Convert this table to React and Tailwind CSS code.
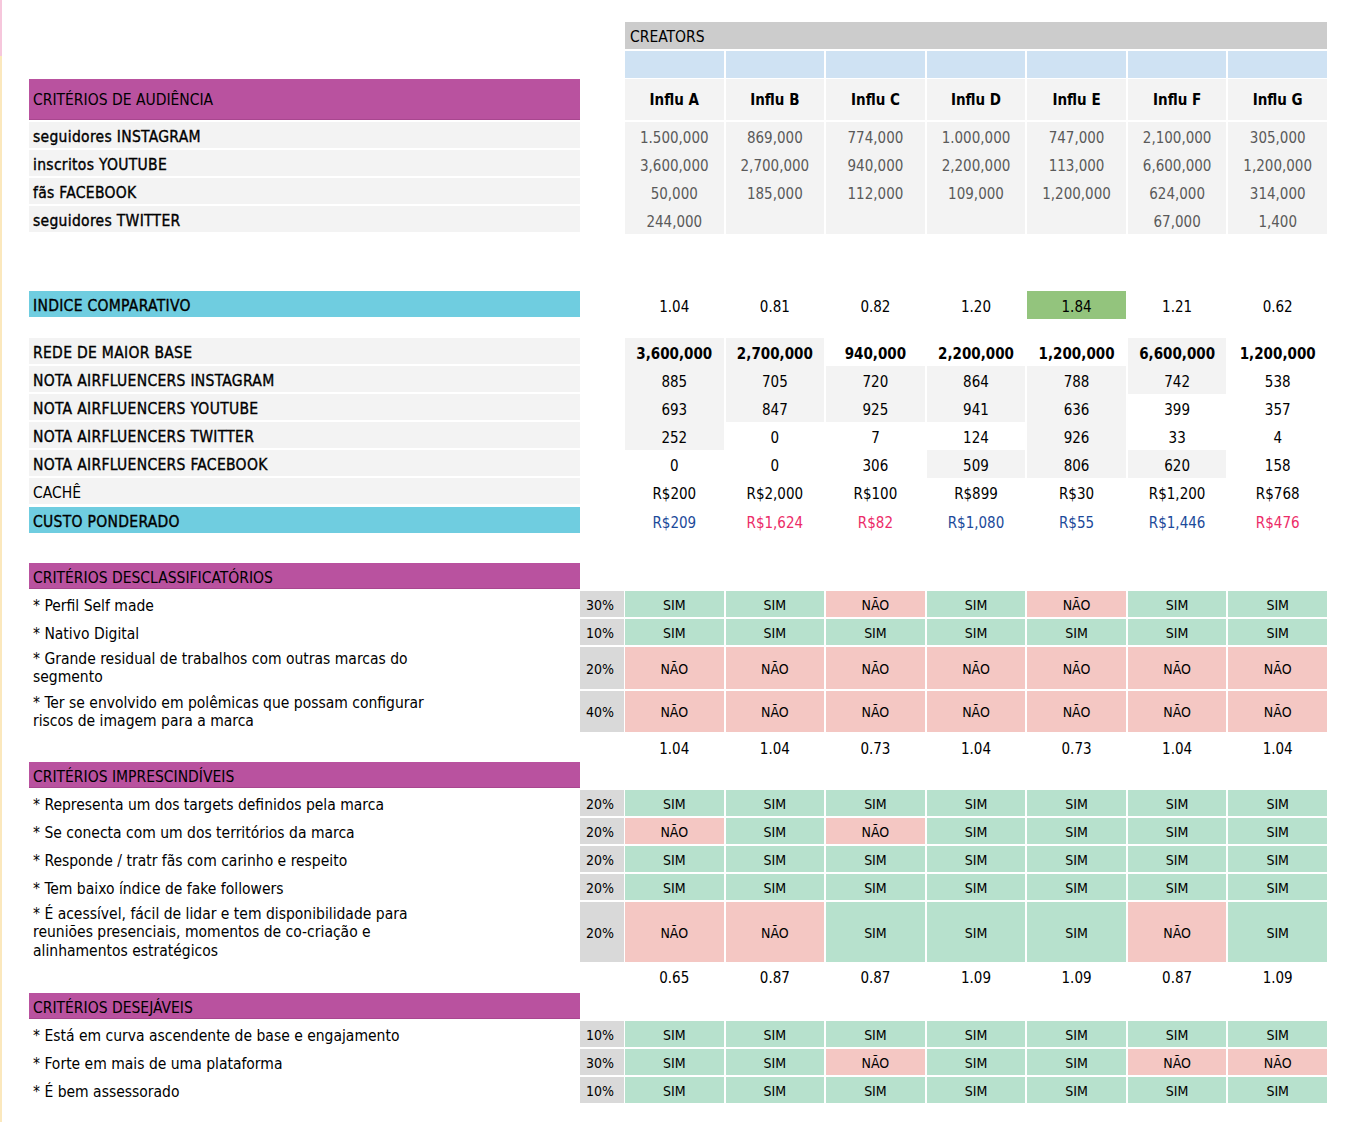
import React from "react";

const FONT = "font-['DejaVu_Sans_Condensed','DejaVu_Sans',sans-serif]";

const G = "bg-[#f3f3f3]";
const SIM = "bg-[#b7e1cd]";
const NAO = "bg-[#f4c7c3]";
const SEMI = "[-webkit-text-stroke:0.35px_currentColor] tracking-[0.3px]";
const LBL = "text-[15.5px]";

function Row({ hc = "h-[26px]", mt = "mt-[2px]", label, labelCls = "pt-[5px]", weight, cells }) {
  return (
    <div className={`flex ${hc} ${mt}`}>
      <div className={`w-[551px] shrink-0 flex items-center pl-[4px] ${LBL} ${labelCls}`}>{label}</div>
      <div
        className={`w-[44px] shrink-0 mr-[1px] flex items-center pl-[6px] pt-[2px] text-[14px] ${
          weight ? "bg-[#d9d9d9]" : ""
        }`}
      >
        {weight}
      </div>
      <div className="grid grid-cols-7 gap-x-[2px] w-[702px] shrink-0">
        {cells.map((c, i) => (
          <div key={i} className={`flex items-center justify-center ${c.cls || ""}`}>
            {c.v}
          </div>
        ))}
      </div>
    </div>
  );
}

const NUM = "pt-[5px]";
const mk = (vals, cls) => vals.map((v) => ({ v, cls }));
const yn = (vals) =>
  vals.map((v) => ({ v: v ? "SIM" : "NÃO", cls: `${v ? SIM : NAO} text-[14px] pt-[2px]` }));
const grayAt = (vals, idx) => vals.map((v, i) => ({ v, cls: `${NUM} ${idx.includes(i) ? G : ""}` }));

function Header({ children, mt = "mt-[2px]" }) {
  return (
    <Row
      mt={mt}
      label={children}
      labelCls="bg-[#b9529f] border-b border-[#a8478f] pt-[6px]"
      cells={mk(["", "", "", "", "", "", ""], "")}
    />
  );
}

export default function App() {
  const audience = [
    ["seguidores INSTAGRAM", ["1.500,000", "869,000", "774,000", "1.000,000", "747,000", "2,100,000", "305,000"]],
    ["inscritos YOUTUBE", ["3,600,000", "2,700,000", "940,000", "2,200,000", "113,000", "6,600,000", "1,200,000"]],
    ["fãs FACEBOOK", ["50,000", "185,000", "112,000", "109,000", "1,200,000", "624,000", "314,000"]],
    ["seguidores TWITTER", ["244,000", "", "", "", "", "67,000", "1,400"]],
  ];

  const BLUE = "text-[#1c4a9a]";
  const PINK = "text-[#ec2c68]";

  return (
    <div className={`flex min-h-[1122px] bg-white text-black text-[15px] ${FONT}`}>
      <div className="w-[2px] shrink-0 flex flex-col">
        <div className="h-[56px] bg-[#f6c7dc]" />
        <div className="flex-1 bg-[#fbe8bd]" />
      </div>
      <div className="pl-[27px] pt-[22px] flex flex-col">
        {/* CREATORS */}
        <div className="flex h-[27px]">
          <div className="w-[596px] shrink-0" />
          <div className={`w-[702px] bg-[#cccccc] flex items-center pl-[5px] pt-[5px] ${LBL}`}>CREATORS</div>
        </div>
        <div className="flex h-[27px] mt-[2px]">
          <div className="w-[596px] shrink-0" />
          <div className="grid grid-cols-7 gap-x-[2px] w-[702px]">
            {[0, 1, 2, 3, 4, 5, 6].map((i) => (
              <div key={i} className="bg-[#cfe2f3]" />
            ))}
          </div>
        </div>

        <Row
          hc="h-[41px]"
          mt="mt-[1px]"
          label="CRITÉRIOS DE AUDIÊNCIA"
          labelCls="bg-[#b9529f] border-b border-[#a8478f] pt-[3px]"
          cells={mk(["Influ A", "Influ B", "Influ C", "Influ D", "Influ E", "Influ F", "Influ G"], `${G} font-bold pt-[2px]`)}
        />
        {audience.map(([l, v]) => (
          <Row key={l} label={l} labelCls={`${G} ${SEMI} pt-[5px]`} cells={mk(v, `${G} ${NUM} text-[#5a5a5a]`)} />
        ))}

        <Row
          mt="mt-[59px]"
          label="INDICE COMPARATIVO"
          labelCls={`bg-[#6fcde0] pt-[5px] ${SEMI}`}
          cells={["1.04", "0.81", "0.82", "1.20", "1.84", "1.21", "0.62"].map((v, i) => ({
            v,
            cls: `${NUM} ${i === 4 ? "bg-[#93c47d]" : ""}`,
          }))}
        />

        <Row
          mt="mt-[21px]"
          label="REDE DE MAIOR BASE"
          labelCls={`${G} ${SEMI} pt-[5px]`}
          cells={grayAt(["3,600,000", "2,700,000", "940,000", "2,200,000", "1,200,000", "6,600,000", "1,200,000"], [0, 1, 5]).map(
            (c) => ({ ...c, cls: `${c.cls} font-bold` })
          )}
        />
        <Row label="NOTA AIRFLUENCERS INSTAGRAM" labelCls={`${G} ${SEMI} pt-[5px]`} cells={grayAt(["885", "705", "720", "864", "788", "742", "538"], [0, 1, 2, 3, 4, 5])} />
        <Row label="NOTA AIRFLUENCERS YOUTUBE" labelCls={`${G} ${SEMI} pt-[5px]`} cells={grayAt(["693", "847", "925", "941", "636", "399", "357"], [0, 1, 2, 3, 4])} />
        <Row label="NOTA AIRFLUENCERS TWITTER" labelCls={`${G} ${SEMI} pt-[5px]`} cells={grayAt(["252", "0", "7", "124", "926", "33", "4"], [0, 4])} />
        <Row label="NOTA AIRFLUENCERS FACEBOOK" labelCls={`${G} ${SEMI} pt-[5px]`} cells={grayAt(["0", "0", "306", "509", "806", "620", "158"], [3, 4, 5])} />
        <Row label="CACHÊ" labelCls={`${G} pt-[5px]`} cells={mk(["R$200", "R$2,000", "R$100", "R$899", "R$30", "R$1,200", "R$768"], NUM)} />
        <Row
          mt="mt-[3px]"
          label="CUSTO PONDERADO"
          labelCls={`bg-[#6fcde0] pt-[5px] ${SEMI}`}
          cells={[
            { v: "R$209", cls: BLUE },
            { v: "R$1,624", cls: PINK },
            { v: "R$82", cls: PINK },
            { v: "R$1,080", cls: BLUE },
            { v: "R$55", cls: BLUE },
            { v: "R$1,446", cls: BLUE },
            { v: "R$476", cls: PINK },
          ].map((c) => ({ ...c, cls: `${c.cls} ${NUM}` }))}
        />

        {/* DESCLASSIFICATÓRIOS */}
        <Header mt="mt-[30px]">CRITÉRIOS DESCLASSIFICATÓRIOS</Header>
        <Row label="* Perfil Self made" weight="30%" cells={yn([1, 1, 0, 1, 0, 1, 1])} />
        <Row label="* Nativo Digital" weight="10%" cells={yn([1, 1, 1, 1, 1, 1, 1])} />
        <Row
          hc="h-[42px]"
          labelCls="leading-[18px]"
          label={
            <span>
              * Grande residual de trabalhos com outras marcas do
              <br />
              segmento
            </span>
          }
          weight="20%"
          cells={yn([0, 0, 0, 0, 0, 0, 0])}
        />
        <Row
          hc="h-[41px]"
          labelCls="leading-[18px]"
          label={
            <span>
              * Ter se envolvido em polêmicas que possam configurar
              <br />
              riscos de imagem para a marca
            </span>
          }
          weight="40%"
          cells={yn([0, 0, 0, 0, 0, 0, 0])}
        />
        <Row hc="h-[30px]" mt="mt-0" label="" cells={mk(["1.04", "1.04", "0.73", "1.04", "0.73", "1.04", "1.04"], NUM)} />

        {/* IMPRESCINDÍVEIS */}
        <Header mt="mt-0">CRITÉRIOS IMPRESCINDÍVEIS</Header>
        <Row label="* Representa um dos targets definidos pela marca" weight="20%" cells={yn([1, 1, 1, 1, 1, 1, 1])} />
        <Row label="* Se conecta com um dos territórios da marca" weight="20%" cells={yn([0, 1, 0, 1, 1, 1, 1])} />
        <Row label="* Responde / tratr fãs com carinho e respeito" weight="20%" cells={yn([1, 1, 1, 1, 1, 1, 1])} />
        <Row label="* Tem baixo índice de fake followers" weight="20%" cells={yn([1, 1, 1, 1, 1, 1, 1])} />
        <Row
          hc="h-[60px]"
          labelCls="leading-[18.5px] pt-[1px]"
          label={
            <span>
              * É acessível, fácil de lidar e tem disponibilidade para
              <br />
              reuniões presenciais, momentos de co-criação e
              <br />
              alinhamentos estratégicos
            </span>
          }
          weight="20%"
          cells={yn([0, 0, 1, 1, 1, 0, 1])}
        />
        <Row hc="h-[31px]" mt="mt-0" label="" cells={mk(["0.65", "0.87", "0.87", "1.09", "1.09", "0.87", "1.09"], "pt-[2px]")} />

        {/* DESEJÁVEIS */}
        <Header mt="mt-0">CRITÉRIOS DESEJÁVEIS</Header>
        <Row label="* Está em curva ascendente de base e engajamento" weight="10%" cells={yn([1, 1, 1, 1, 1, 1, 1])} />
        <Row label="* Forte em mais de uma plataforma" weight="30%" cells={yn([1, 1, 0, 1, 1, 0, 0])} />
        <Row label="* É bem assessorado" weight="10%" cells={yn([1, 1, 1, 1, 1, 1, 1])} />
      </div>
    </div>
  );
}
